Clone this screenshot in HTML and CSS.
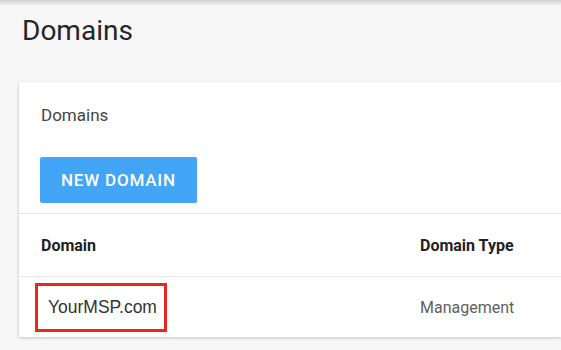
FILE: index.html
```html
<!doctype html>
<html lang="en">
    <head>
        <meta charset="UTF-8" />
        <meta name="viewport" content="width=device-width, initial-scale=1.0" />
        <title>Domains</title>
        <link rel="stylesheet" href="styles.css">
    </head>
    <body>
        <div class="app-bar-shadow"></div>
        <main class="page">
            <h1 class="page-title">Domains</h1>

            <section class="card">
                <div class="card-top">
                    <h2 class="card-title">Domains</h2>
                    <button class="new-button">NEW DOMAIN</button>
                </div>

                <div class="table">
                    <div class="table-row table-head">
                        <div class="cell">Domain</div>
                        <div class="cell">Domain Type</div>
                    </div>
                    <div class="table-row">
                        <div class="cell">
                            <span class="highlight">YourMSP.com</span>
                        </div>
                        <div class="cell cell-muted">Management</div>
                    </div>
                </div>
            </section>
        </main>
    </body>
</html>
```

FILE: styles.css
```css
*,
*::before,
*::after {
    margin: 0;
    padding: 0;
    box-sizing: border-box;
}

:root {
    --bg-color: #f7f7f7;
    --text-color: #212121;
    --primary-color: #42a5f5;
    --line-color: #e6e6e6;
    --mark-color: #e8281c;
}

body {
    font-family: Roboto, "Noto Sans", sans-serif;
    background: var(--bg-color);
    color: var(--text-color);
    height: 350px;
    overflow: hidden;
}

.app-bar-shadow {
    height: 6px;
    background: linear-gradient(rgba(0, 0, 0, 0.16), rgba(0, 0, 0, 0));
}

.page {
    padding: 9px 0 0 19px;
}

.page-title {
    font-size: 28px;
    line-height: 32px;
    font-weight: 400;
    color: #262626;
    padding-left: 3px;
    margin-bottom: 35px;
}

.card {
    background: white;
    box-shadow: 0 1px 3px rgba(0, 0, 0, 0.22);
}

.card-top {
    padding: 23px 22px 10px 21px;
    border-bottom: 1px solid var(--line-color);
}

.card-title {
    font-size: 17px;
    line-height: 20px;
    font-weight: 400;
    color: #444;
    padding-left: 1px;
    margin-bottom: 32px;
}

.new-button {
    display: inline-flex;
    align-items: center;
    height: 46px;
    padding: 0 21px;
    border: none;
    border-radius: 2px;
    background: var(--primary-color);
    color: white;
    font-family: Roboto, sans-serif;
    font-size: 17px;
    font-weight: 500;
    letter-spacing: 0.8px;
    cursor: pointer;
}

.table-row {
    display: grid;
    grid-template-columns: 379px 1fr;
    align-items: center;
    height: 60px;
    padding-left: 22px;
}

.table-head {
    height: 63px;
    border-bottom: 1px solid var(--line-color);
}

.table-head .cell {
    font-size: 16px;
    font-weight: 700;
    color: #222;
}

.cell {
    font-size: 16px;
}

.cell-muted {
    color: #616161;
}

.highlight {
    display: inline-flex;
    align-items: center;
    height: 49px;
    margin-left: -6px;
    padding: 0 7px 0 10px;
    border: 3px solid var(--mark-color);
    font-family: "Liberation Sans", Arial, sans-serif;
    font-size: 17.5px;
    color: #333;
}
```
